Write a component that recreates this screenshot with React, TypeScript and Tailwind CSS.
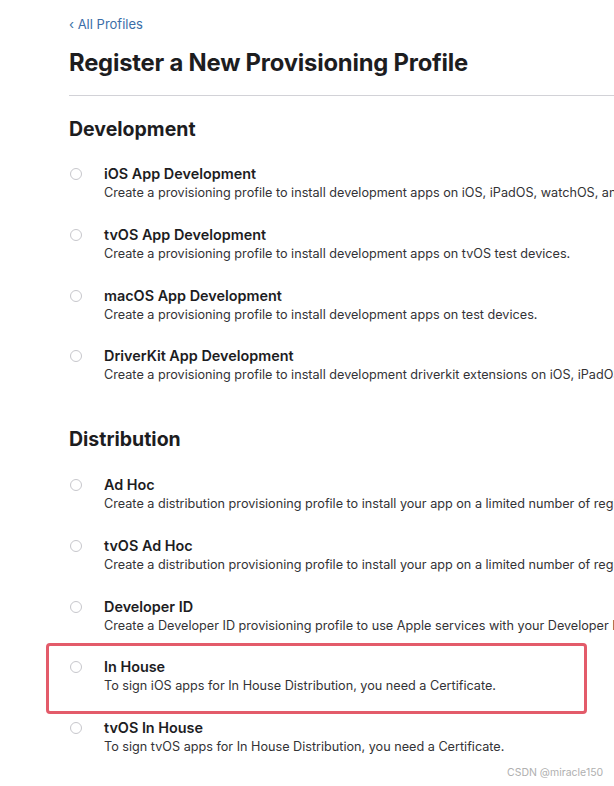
const DEV = [
  {
    title: "iOS App Development",
    desc: "Create a provisioning profile to install development apps on iOS, iPadOS, watchOS, and visionOS devices.",
  },
  {
    title: "tvOS App Development",
    desc: "Create a provisioning profile to install development apps on tvOS test devices.",
  },
  {
    title: "macOS App Development",
    desc: "Create a provisioning profile to install development apps on test devices.",
  },
  {
    title: "DriverKit App Development",
    desc: "Create a provisioning profile to install development driverkit extensions on iOS, iPadOS and macOS devices.",
  },
];

const DIST = [
  {
    title: "Ad Hoc",
    desc: "Create a distribution provisioning profile to install your app on a limited number of registered devices.",
  },
  {
    title: "tvOS Ad Hoc",
    desc: "Create a distribution provisioning profile to install your app on a limited number of registered tvOS devices.",
  },
  {
    title: "Developer ID",
    desc: "Create a Developer ID provisioning profile to use Apple services with your Developer ID signed applications.",
  },
  {
    title: "In House",
    desc: "To sign iOS apps for In House Distribution, you need a Certificate.",
    marked: true,
  },
  {
    title: "tvOS In House",
    desc: "To sign tvOS apps for In House Distribution, you need a Certificate.",
  },
];

type Row = { title: string; desc: string; marked?: boolean };

function Option({ row }: { row: Row }) {
  return (
    <div className="relative flex h-[60.75px] items-start">
      {/* highlight frame drawn over the row */}
      {row.marked && (
        <div className="absolute left-[-23px] top-[-15px] h-[71px] w-[541px] rounded-[4px] border-[3px] border-[#e35b6a]" />
      )}
      <span className="ml-[1px] mt-[3px] h-[12px] w-[12px] shrink-0 rounded-full border border-[#c7c7cc] bg-white" />
      <div className="ml-[22px] whitespace-nowrap">
        <p className="text-[14.4px] font-semibold leading-[18px] text-[#1d1d1f]">{row.title}</p>
        <p className="mt-[1px] text-[12.65px] leading-[18px] text-[#333336]">{row.desc}</p>
      </div>
    </div>
  );
}

export default function App() {
  return (
    <div
      className="relative h-[786px] w-[614px] overflow-hidden bg-white"
      style={{ fontFamily: "Inter, 'Noto Sans', sans-serif" }}
    >
      <div className="pl-[69px] pt-[16px]">
        <a className="block text-[13px] leading-[16px] text-[#3b6ea8]">‹ All Profiles</a>
        <h1 className="mt-[16px] text-[23.8px] font-bold leading-[30px] tracking-[-0.2px] text-[#1d1d1f]">
          Register a New Provisioning Profile
        </h1>
        <div className="mt-[17px] h-px bg-[#d2d2d7]" />

        <h2 className="mt-[21px] text-[19.5px] font-bold leading-[24px] text-[#1d1d1f]">Development</h2>
        <div className="mt-[24px]">
          {DEV.map((r) => (
            <Option key={r.title} row={r} />
          ))}
        </div>

        <h2 className="mt-[19px] text-[19.5px] font-bold leading-[24px] text-[#1d1d1f]">Distribution</h2>
        <div className="mt-[25px]">
          {DIST.map((r) => (
            <Option key={r.title} row={r} />
          ))}
        </div>
      </div>
      <div className="absolute left-[507px] top-[766px] text-[10.5px] leading-[14px] text-[#b0b0b0]">
        CSDN @miracle150
      </div>
    </div>
  );
}
